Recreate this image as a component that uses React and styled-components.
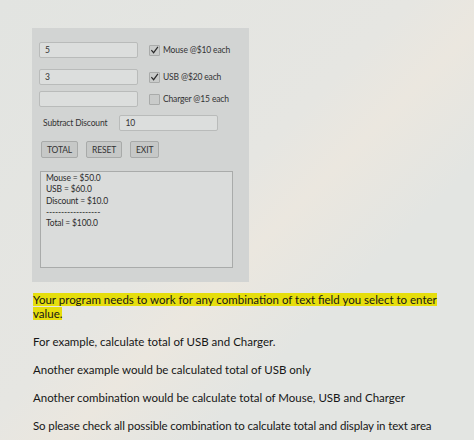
import React from 'react';
import styled, { createGlobalStyle } from 'styled-components';

const GlobalStyle = createGlobalStyle`
  html, body {
    margin: 0;
    padding: 0;
  }
  body {
    background: #e3e5e2;
    font-family: Lato, "Open Sans", sans-serif;
    color: #1e1e1e;
  }
`;

const items = [
  { qty: '5', label: 'Mouse @$10 each', checked: true, gap: 0 },
  { qty: '3', label: 'USB @$20 each', checked: true, gap: 11 },
  { qty: '', label: 'Charger @15 each', checked: false, gap: 6 },
];

const output = [
  'Mouse = $50.0',
  'USB = $60.0',
  'Discount = $10.0',
  '------------------',
  'Total = $100.0',
];

function CheckItem({ label, checked }) {
  return (
    <CheckLabel>
      <Box>
        {checked && (
          <svg width='10' height='10' viewBox='0 0 10 10'>
            <path d='M1.5 5.2 L4 8 L8.8 1.5' fill='none' stroke='#2a2a2a' strokeWidth='1.3' />
          </svg>
        )}
      </Box>
      <span>{label}</span>
    </CheckLabel>
  );
}

function App() {
  return (
    <Page>
      <GlobalStyle />
      <Window>
        {items.map((item) => (
          <Row key={item.label} gap={item.gap}>
            <Field>{item.qty}</Field>
            <CheckItem label={item.label} checked={item.checked} />
          </Row>
        ))}
        <DiscountRow>
          <span>Subtract Discount</span>
          <Field>10</Field>
        </DiscountRow>
        <ButtonBar>
          <Button>TOTAL</Button>
          <Button>RESET</Button>
          <Button>EXIT</Button>
        </ButtonBar>
        <TextArea>
          {output.map((line) => (
            <div key={line}>{line}</div>
          ))}
        </TextArea>
      </Window>
      <Notes>
        <Para>
          <Highlight>
            Your program needs to work for any combination of text field you select to enter value.
          </Highlight>
        </Para>
        <Para single>For example, calculate total of USB and Charger.</Para>
        <Para single>Another example would be calculated total of USB only</Para>
        <Para single>Another combination would be calculate total of Mouse, USB and Charger</Para>
        <Para single tight>
          So please check all possible combination to calculate total and display in text area
        </Para>
      </Notes>
    </Page>
  );
}

export default App;

// styled-components
const Page = styled.div`
  width: 474px;
  height: 440px;
  box-sizing: border-box;
  padding: 28px 0 0 32px;
  overflow: hidden;
  background: linear-gradient(135deg, #e2e4e1 0%, #e6e6e2 45%, #ebe7df 55%, #e3e5e2 70%);
`;

const Window = styled.div`
  width: 217px;
  height: 254px;
  box-sizing: border-box;
  padding: 14px 0 0 7px;
  background: #d2d4d3;
  display: flex;
  flex-direction: column;
  font-size: 8.5px;
  letter-spacing: -0.15px;
  color: #2b2b2b;
`;

const Row = styled.div`
  display: flex;
  align-items: center;
  gap: 11px;
  margin-top: ${(props) => props.gap}px;
`;

const Field = styled.div`
  width: 99px;
  height: 16px;
  box-sizing: border-box;
  padding: 0 5px;
  line-height: 14px;
  background: #dcdedd;
  border: 1px solid #b9bbba;
  border-radius: 2px;
  color: #333;
`;

const CheckLabel = styled.label`
  display: flex;
  align-items: center;
  gap: 3px;
  color: #333;
`;

const Box = styled.span`
  width: 11px;
  height: 11px;
  box-sizing: border-box;
  display: flex;
  align-items: center;
  justify-content: center;
  background: #c9cbca;
  border: 1px solid #a9abaa;
  border-radius: 1px;
`;

const DiscountRow = styled.div`
  display: flex;
  align-items: center;
  margin-top: 8px;
  padding-left: 4px;
  gap: 12px;
  color: #333;
`;

const Button = styled.button`
  height: 17px;
  padding: 0 5px;
  font-family: Lato, sans-serif;
  font-size: 8.5px;
  letter-spacing: -0.15px;
  color: #333;
  background: #c6c8c7;
  border: 1px solid #a8aaa9;
  border-radius: 2px;
`;

const ButtonBar = styled.div`
  display: flex;
  gap: 8px;
  margin-top: 10px;
  padding-left: 2px;
`;

const TextArea = styled.div`
  width: 193px;
  height: 97px;
  box-sizing: border-box;
  margin-top: 13px;
  margin-left: 1px;
  padding: 1px 5px;
  background: #dadcdb;
  border: 1px solid #a9abaa;
  line-height: 11.3px;
  color: #2b2b2b;
`;

const Notes = styled.div`
  width: 408px;
  margin-top: 11px;
  font-size: 11.5px;
  line-height: 13.5px;
  color: #161616;
`;

const Para = styled.p`
  margin: 0 0 14.5px;
  padding-left: 1px;
  white-space: ${(props) => (props.single ? 'nowrap' : 'normal')};
  letter-spacing: ${(props) => (props.tight ? '-0.12px' : '0')};
`;

const Highlight = styled.span`
  background: #e6de0c;
  box-decoration-break: clone;
  -webkit-box-decoration-break: clone;
`;
